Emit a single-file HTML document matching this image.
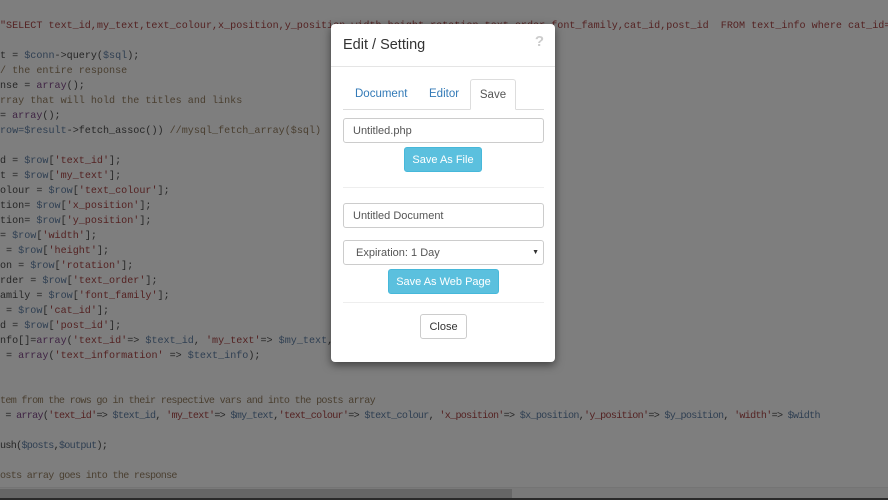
<!DOCTYPE html>
<html><head><meta charset="utf-8"><style>
html,body{margin:0;padding:0;width:888px;height:500px;overflow:hidden;background:#7e7e7e;}
.code{position:absolute;left:0;top:0;width:888px;height:500px;overflow:hidden;background-color:#7e7e7e;font-family:"Liberation Mono",monospace;font-size:10.1px;color:#262626;}
.l{position:absolute;left:0;white-space:pre;height:15px;line-height:15px;}
.n{letter-spacing:-0.7px;}
.s{color:#542222}.v{color:#2f3f52}.c{color:#4a3f30}.k{color:#3f2444}
.sb{position:absolute;left:0;top:487px;width:888px;height:11px;background-color:#797979;border-top:1px solid #747474}
.sb i{position:absolute;left:0;top:1px;width:512px;height:10px;background-color:#666666}
.bot{position:absolute;left:0;top:498px;width:888px;height:2px;background-color:#2a2a2a}
.modal{position:absolute;left:331px;top:24px;width:224px;height:338px;background:#fff;border-radius:4px;box-shadow:0 3px 9px rgba(0,0,0,.5);font-family:"Liberation Sans",sans-serif;color:#333;}
.hd{position:absolute;left:0;top:0;width:224px;height:42px;border-bottom:1px solid #e5e5e5}
.hd .t{position:absolute;left:12px;top:13px;font-size:14.5px}
.hd .q{position:absolute;right:11px;top:9px;font-size:15px;color:#ccc;font-weight:bold}
.tabs{position:absolute;left:12px;top:85px;width:201px;height:0;border-bottom:1px solid #ddd}
.tab{position:absolute;font-size:11.5px;color:#337ab7;top:64px}
.tab.act{left:139px;top:55px;width:46px;height:31px;border:1px solid #ddd;border-bottom:1px solid #fff;border-radius:3px 3px 0 0;color:#555;text-align:center;line-height:30px;box-sizing:border-box}
.inp{position:absolute;left:12px;width:201px;height:25px;border:1px solid #ccc;border-radius:3px;box-sizing:border-box;font-size:11px;color:#555;padding-left:9px;line-height:24px}
.btn{position:absolute;height:25px;border-radius:3px;box-sizing:border-box;font-size:11px;text-align:center;line-height:24px}
.info{background:#5bc0de;border:1px solid #46b8da;color:#fff}
.hr{position:absolute;left:12px;width:201px;height:1px;background:#eee}
</style></head><body>
<div class="code">
<div class="l" style="top:19px"><span class="s">"SELECT text_id,my_text,text_colour,x_position,y_position,width,height,rotation,text_order,font_family,cat_id,post_id  FROM text_info where cat_id='</span><span class="v">$cat_id</span></div>
<div class="l" style="top:49px">t = <span class="v">$conn</span>-&gt;query(<span class="v">$sql</span>);</div>
<div class="l c" style="top:64px">/ the entire response</div>
<div class="l" style="top:79px">nse = <span class="k">array</span>();</div>
<div class="l c" style="top:94px">rray that will hold the titles and links</div>
<div class="l" style="top:109px">= <span class="k">array</span>();</div>
<div class="l" style="top:124px"><span class="v">row=$result</span>-&gt;fetch_assoc()) <span class="c">//mysql_fetch_array($sql)</span></div>
<div class="l" style="top:154px">d = <span class="v">$row</span>[<span class="s">'text_id'</span>];</div>
<div class="l" style="top:169px">t = <span class="v">$row</span>[<span class="s">'my_text'</span>];</div>
<div class="l" style="top:184px">olour = <span class="v">$row</span>[<span class="s">'text_colour'</span>];</div>
<div class="l" style="top:199px">tion= <span class="v">$row</span>[<span class="s">'x_position'</span>];</div>
<div class="l" style="top:214px">tion= <span class="v">$row</span>[<span class="s">'y_position'</span>];</div>
<div class="l" style="top:229px">= <span class="v">$row</span>[<span class="s">'width'</span>];</div>
<div class="l" style="top:244px"> = <span class="v">$row</span>[<span class="s">'height'</span>];</div>
<div class="l" style="top:259px">on = <span class="v">$row</span>[<span class="s">'rotation'</span>];</div>
<div class="l" style="top:274px">rder = <span class="v">$row</span>[<span class="s">'text_order'</span>];</div>
<div class="l" style="top:289px">amily = <span class="v">$row</span>[<span class="s">'font_family'</span>];</div>
<div class="l" style="top:304px"> = <span class="v">$row</span>[<span class="s">'cat_id'</span>];</div>
<div class="l" style="top:319px">d = <span class="v">$row</span>[<span class="s">'post_id'</span>];</div>
<div class="l" style="top:334px">nfo[]=<span class="k">array</span>(<span class="s">'text_id'</span>=&gt; <span class="v">$text_id</span>, <span class="s">'my_text'</span>=&gt; <span class="v">$my_text</span>,<span class="s">'text_colour'</span></div>
<div class="l" style="top:349px"> = <span class="k">array</span>(<span class="s">'text_information'</span> =&gt; <span class="v">$text_info</span>);</div>
<div class="l c n" style="top:394px">tem from the rows go in their respective vars and into the posts array</div>
<div class="l n" style="top:409px"> = <span class="k">array</span>(<span class="s">'text_id'</span>=&gt; <span class="v">$text_id</span>, <span class="s">'my_text'</span>=&gt; <span class="v">$my_text</span>,<span class="s">'text_colour'</span>=&gt; <span class="v">$text_colour</span>, <span class="s">'x_position'</span>=&gt; <span class="v">$x_position</span>,<span class="s">'y_position'</span>=&gt; <span class="v">$y_position</span>, <span class="s">'width'</span>=&gt; <span class="v">$width</span></div>
<div class="l n" style="top:439px">ush(<span class="v">$posts</span>,<span class="v">$output</span>);</div>
<div class="l c n" style="top:469px">osts array goes into the response</div>
<div class="sb"><i></i></div>
<div class="bot"></div>
</div>
<div class="modal">
 <div class="hd"><span class="t">Edit / Setting</span><span class="q">?</span></div>
 <span class="tab" style="left:24px">Document</span>
 <span class="tab" style="left:98px">Editor</span>
 <div class="tabs"></div>
 <div class="tab act">Save</div>
 <div class="inp" style="top:94px">Untitled.php</div>
 <div class="btn info" style="left:73px;top:123px;width:78px">Save As File</div>
 <div class="hr" style="top:163px"></div>
 <div class="inp" style="top:179px">Untitled Document</div>
 <div class="inp" style="top:216px;padding-left:12px">Expiration: 1 Day<span style="position:absolute;right:4px;top:0;font-size:7px;color:#333">▼</span></div>
 <div class="btn info" style="left:57px;top:245px;width:111px">Save As Web Page</div>
 <div class="hr" style="top:278px"></div>
 <div class="btn" style="left:89px;top:290px;width:47px;border:1px solid #ccc;color:#333">Close</div>
</div>
</body></html>
